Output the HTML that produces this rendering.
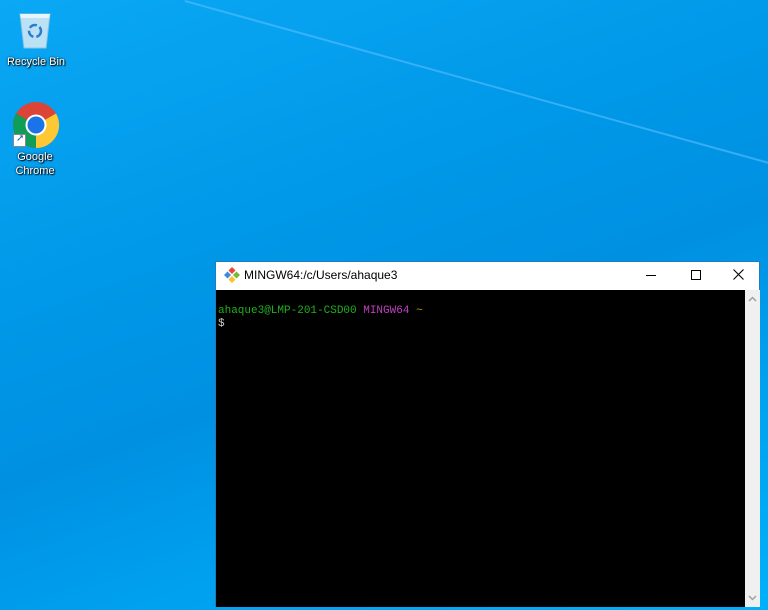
<!DOCTYPE html>
<html><head><meta charset="utf-8"><style>
html,body{margin:0;padding:0;width:768px;height:610px;overflow:hidden;}
body{position:relative;font-family:"Liberation Sans",sans-serif;
background:linear-gradient(160deg,#0aa8f5 0%,#0098e8 35%,#0090e2 55%,#00a2f0 75%,#00b0fa 100%);}
.beam{position:absolute;left:185px;top:0;width:620px;height:1.5px;background:rgba(90,190,255,.6);transform-origin:0 0;transform:rotate(15.5deg);}
.lbl{position:absolute;color:#fff;font-size:11px;text-align:center;text-shadow:0 0 2px #000,1px 1px 1px #000;line-height:14px;}
.win{position:absolute;left:215px;top:261px;width:545px;height:346px;background:#fff;border:1px solid #1a7ec0;box-sizing:border-box;}
.title{position:absolute;left:28px;top:6px;font-size:12px;color:#000;}
.term{position:absolute;left:0;top:28px;width:529px;height:317px;background:#000;font-family:"Liberation Mono",monospace;font-size:11px;line-height:13px;}
.sb{position:absolute;left:529px;top:28px;width:15px;height:317px;background:#f0f0f0;}
</style></head><body>
<div class="beam"></div>
<svg style="position:absolute;left:16px;top:8px" width="38" height="42" viewBox="0 0 38 42">
<path d="M4 6 L34 6 L30 40 L8 40 Z" fill="#cfe8f5" stroke="#9fc8e0" opacity=".9"/>
<path d="M4 6 L34 6 L33 10 L5 10Z" fill="#e8f4fb"/>
<circle cx="19" cy="23" r="6" fill="none" stroke="#2a7cd0" stroke-width="2.5" stroke-dasharray="8 3"/>
</svg>
<div class="lbl" style="left:0;top:55px;width:72px">Recycle Bin</div>
<svg style="position:absolute;left:12px;top:101px" width="48" height="48" viewBox="0 0 48 48">
<circle cx="24" cy="24" r="23" fill="#db4437"/>
<path d="M24 24 L4.1 35.5 A23 23 0 0 1 4.1 12.5 Z" fill="#0f9d58"/>
<path d="M24 24 L4.1 35.5 A23 23 0 0 0 24 47 Z" fill="#0f9d58"/>
<path d="M24 24 L44 12.5 A23 23 0 0 1 24 47 Z" fill="#fcc934"/>
<circle cx="24" cy="24" r="10.5" fill="#fff"/>
<circle cx="24" cy="24" r="8.5" fill="#1a73e8"/>
</svg>
<div style="position:absolute;left:13px;top:134px;width:11px;height:11px;background:#fff;border:1px solid #888"><span style="position:absolute;left:2px;top:-2px;color:#1a5fb4;font-size:10px">➚</span></div>
<div class="lbl" style="left:0;top:150px;width:70px">Google<br>Chrome</div>
<div class="win">
<svg style="position:absolute;left:8px;top:5px" width="16" height="16" viewBox="0 0 16 16">
<rect x="5.5" y="1" width="5" height="5" fill="#e8483a" transform="rotate(45 8 3.5)"/>
<rect x="10" y="5.5" width="5" height="5" fill="#7ab83a" transform="rotate(45 12.5 8)"/>
<rect x="5.5" y="10" width="5" height="5" fill="#f5c32c" transform="rotate(45 8 12.5)"/>
<rect x="1" y="5.5" width="5" height="5" fill="#3d8be0" transform="rotate(45 3.5 8)"/>
</svg>
<div class="title">MINGW64:/c/Users/ahaque3</div>
<div style="position:absolute;left:430px;top:13px;width:10px;height:1px;background:#000"></div>
<div style="position:absolute;left:475px;top:8px;width:8px;height:8px;border:1px solid #000"></div>
<svg style="position:absolute;left:517px;top:7px" width="11" height="11"><path d="M0.5 0.5L10.5 10.5M10.5 0.5L0.5 10.5" stroke="#000" stroke-width="1.1"/></svg>
<div class="term">
<div style="position:absolute;left:2px;top:15px;white-space:pre"><span style="color:#1fb01f">ahaque3@LMP-201-CSD00</span> <span style="color:#c040c0">MINGW64</span> <span style="color:#c0a000">~</span></div>
<div style="position:absolute;left:2px;top:28px;color:#ccc">$</div>
</div>
<div class="sb">
<svg style="position:absolute;left:3px;top:6px" width="9" height="6"><path d="M1 5L4.5 1.5L8 5" stroke="#a0a0a0" fill="none" stroke-width="1.5"/></svg>
<svg style="position:absolute;left:3px;top:305px" width="9" height="6"><path d="M1 1L4.5 4.5L8 1" stroke="#a0a0a0" fill="none" stroke-width="1.5"/></svg>
</div>
</div>
</body></html>
